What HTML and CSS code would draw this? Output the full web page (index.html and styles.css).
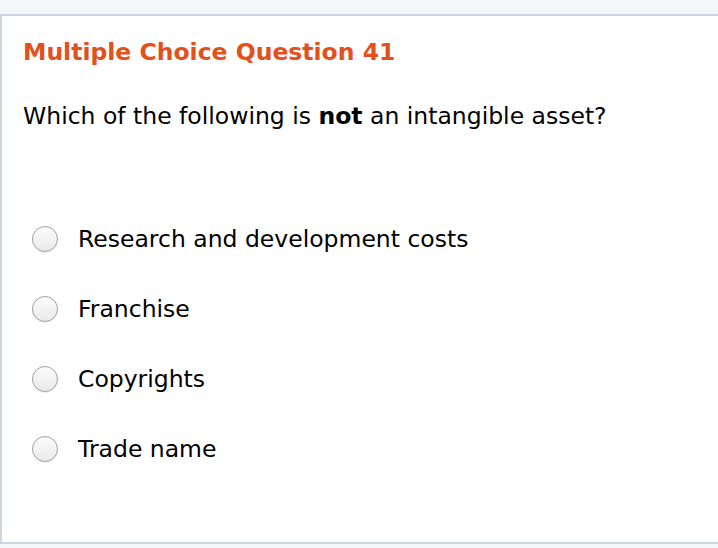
FILE: index.html
```html
<!DOCTYPE html>
<html>
<head>
<meta charset="utf-8">
<link rel="stylesheet" href="styles.css">
</head>
<body>
<div class="card">
  <h1 class="title">Multiple Choice Question 41</h1>
  <p class="question">Which of the following is <b>not</b> an intangible asset?</p>
  <ul class="options">
    <li class="option"><span class="radio"></span><span class="label">Research and development costs</span></li>
    <li class="option"><span class="radio"></span><span class="label">Franchise</span></li>
    <li class="option"><span class="radio"></span><span class="label">Copyrights</span></li>
    <li class="option"><span class="radio"></span><span class="label">Trade name</span></li>
  </ul>
</div>
</body>
</html>
```
FILE: styles.css
```css
html, body {
  margin: 0;
  padding: 0;
  background: #f4f7fa;
  font-family: "DejaVu Sans", Verdana, sans-serif;
}
.card {
  margin-top: 14px;
  height: 526px;
  box-sizing: content-box;
  background: #fff;
  border-top: 2px solid #cdd6e0;
  border-left: 2px solid #cdd6e0;
  border-bottom: 2px solid #cdd6e0;
  padding: 0 0 0 21px;
}
.title {
  margin: 0;
  padding-top: 22px;
  font-size: 23.5px;
  line-height: 28px;
  font-weight: bold;
  color: #e2501c;
}
.question {
  margin: 0;
  padding-top: 36px;
  font-size: 23.5px;
  line-height: 28px;
  color: #000;
}
.options {
  list-style: none;
  margin: 0;
  padding: 74px 0 0 10px;
}
.option {
  display: flex;
  align-items: center;
  height: 70px;
}
.radio {
  width: 24px;
  height: 24px;
  border-radius: 50%;
  border: 1px solid #a0a0a0;
  background: linear-gradient(#fdfdfd, #e9e9e9);
  box-shadow: inset 0 1px 1px rgba(255,255,255,0.8), 0 1px 1px rgba(0,0,0,0.08);
  margin: 0 20px 0 -1px;
  flex: none;
}
.label {
  font-size: 23.5px;
  color: #000;
}
```
